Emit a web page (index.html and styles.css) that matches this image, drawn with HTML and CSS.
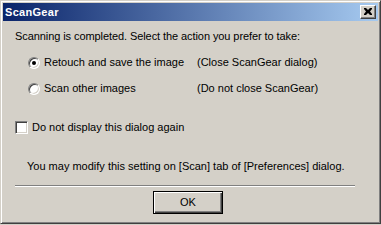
FILE: index.html
```html
<!DOCTYPE html>
<html>
<head>
<meta charset="utf-8">
<link rel="stylesheet" href="styles.css">
</head>
<body>
<div class="window">
  <div class="titlebar">
    <span class="title">ScanGear</span>
    <span class="close-btn"><svg width="8" height="7" viewBox="0 0 8 7"><path d="M0 0h2l2 2 2-2h2v1l-2 2.5 2 2.5v1h-2l-2-2-2 2h-2v-1l2-2.5-2-2.5z" fill="#000"/></svg></span>
  </div>
  <div class="content">
    <p class="message">Scanning is completed. Select the action you prefer to take:</p>
    <div class="options">
      <div class="option">
        <span class="radio checked"></span>
        <span class="opt-label">Retouch and save the image</span>
        <span class="opt-note">(Close ScanGear dialog)</span>
      </div>
      <div class="option">
        <span class="radio"></span>
        <span class="opt-label">Scan other images</span>
        <span class="opt-note">(Do not close ScanGear)</span>
      </div>
    </div>
    <div class="check-row">
      <span class="checkbox"></span>
      <span class="check-label">Do not display this dialog again</span>
    </div>
    <p class="info">You may modify this setting on [Scan] tab of [Preferences] dialog.</p>
    <div class="separator"></div>
    <div class="buttons">
      <button class="btn default">OK</button>
    </div>
  </div>
</div>
</body>
</html>
```
FILE: styles.css
```css
html, body {
  margin: 0;
  padding: 0;
  background: #d4d0c8;
}
.window {
  box-sizing: border-box;
  width: 381px;
  height: 224px;
  background: #d4d0c8;
  border: 1px solid;
  border-color: #d4d0c8 #404040 #404040 #d4d0c8;
  box-shadow: inset 1px 1px #ffffff, inset -1px -1px #808080;
  padding: 2px;
  display: flex;
  flex-direction: column;
  font-family: "Liberation Sans", Arial, sans-serif;
  font-size: 11px;
  color: #000;
}
.titlebar {
  height: 18px;
  background: linear-gradient(to right, #0a246a, #a6caf0);
  display: flex;
  align-items: center;
  justify-content: space-between;
  padding: 0 2px 0 2px;
}
.title {
  color: #fff;
  font-weight: bold;
  font-size: 11px;
  letter-spacing: 0.3px;
}
.close-btn {
  box-sizing: border-box;
  width: 16px;
  height: 14px;
  background: #d4d0c8;
  border: 1px solid;
  border-color: #ffffff #404040 #404040 #ffffff;
  box-shadow: inset -1px -1px #808080;
  display: flex;
  align-items: center;
  justify-content: center;
  padding: 0 1px 1px 0;
}
.close-btn svg { display: block; }
.content {
  display: flex;
  flex-direction: column;
  line-height: 13px;
}
.message {
  margin: 9px 0 0 12px;
  letter-spacing: -0.08px;
}
.options {
  margin: 13px 0 0 25px;
  display: flex;
  flex-direction: column;
  gap: 13px;
}
.option {
  display: grid;
  grid-template-columns: 16px 153px auto;
  align-items: center;
  height: 13px;
}
.radio {
  box-sizing: border-box;
  width: 12px;
  height: 12px;
  border-radius: 50%;
  border: 1px solid;
  border-color: #808080 #ffffff #ffffff #808080;
  box-shadow: inset 1px 1px #404040, inset -1px -1px #d4d0c8;
  background: #fff;
  position: relative;
}
.radio.checked::after {
  content: "";
  position: absolute;
  left: 3px;
  top: 3px;
  width: 4px;
  height: 4px;
  border-radius: 50%;
  background: #000;
}
.check-row {
  margin: 26px 0 0 12px;
  display: flex;
  align-items: center;
  gap: 4px;
  height: 13px;
}
.checkbox {
  box-sizing: border-box;
  width: 13px;
  height: 13px;
  border: 1px solid;
  border-color: #808080 #ffffff #ffffff #808080;
  box-shadow: inset 1px 1px #404040, inset -1px -1px #d4d0c8;
  background: #fff;
}
.info {
  margin: 26px 0 0 24px;
}
.separator {
  margin: 12px 0 0 12px;
  width: 340px;
  height: 1px;
  background: #808080;
  border-bottom: 1px solid #fff;
}
.buttons {
  margin-top: 4px;
  padding-left: 150px;
  display: flex;
}
.btn {
  box-sizing: border-box;
  width: 70px;
  height: 23px;
  font: inherit;
  color: #000;
  background: #d4d0c8;
  border: 1px solid #000;
  box-shadow: inset 1px 1px #fff, inset -1px -1px #404040, inset -2px -2px #808080;
  padding: 0;
}
```
